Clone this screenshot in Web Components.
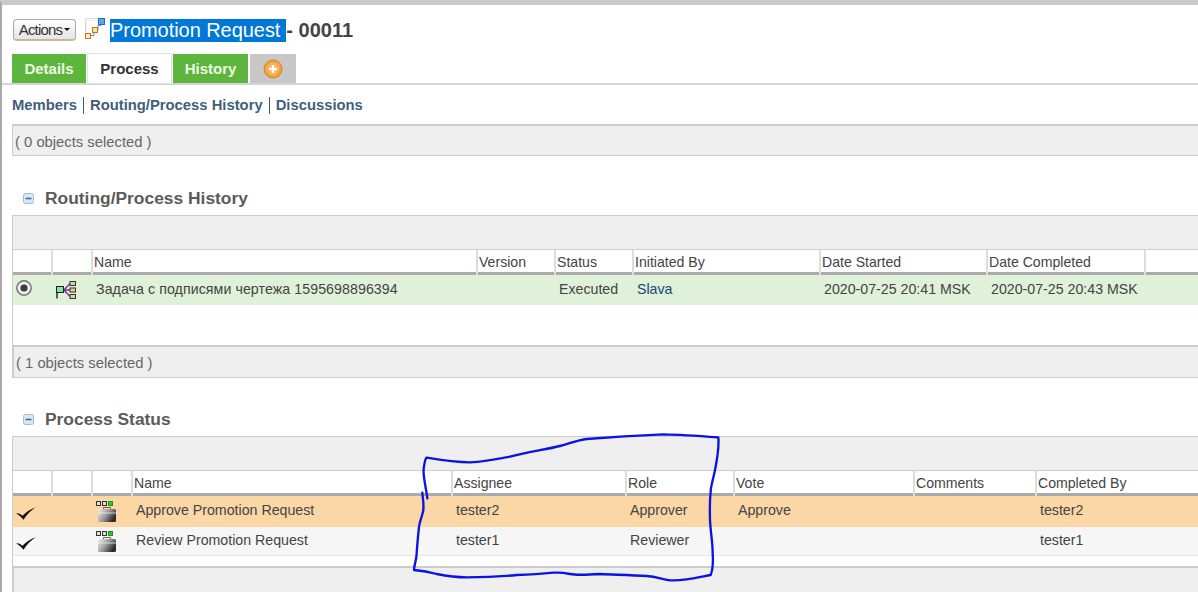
<!DOCTYPE html>
<html>
<head>
<meta charset="utf-8">
<title>Promotion Request</title>
<style>
  html, body { margin: 0; height: 100%; overflow: hidden; background: #fff; }
  body { font-family: "Liberation Sans", Arial, sans-serif; }
</style>
</head>
<body>
<app-page>
  <page-header></page-header>
  <tab-bar></tab-bar>
  <sub-nav></sub-nav>
  <status-bar>( 0 objects selected )</status-bar>

  <section-title style="margin-top:32px">Routing/Process History</section-title>
  <data-table cols="38px 40px 385px 78px 78px 187px 167px 158px 1fr">
    <grid-row type="head">
      <grid-cell></grid-cell><grid-cell></grid-cell>
      <grid-cell>Name</grid-cell><grid-cell>Version</grid-cell><grid-cell>Status</grid-cell>
      <grid-cell>Initiated By</grid-cell><grid-cell>Date Started</grid-cell><grid-cell>Date Completed</grid-cell><grid-cell></grid-cell>
    </grid-row>
    <grid-row bg="#dff1d8" h="30">
      <grid-cell icon><radio-icon></radio-icon></grid-cell>
      <grid-cell icon><tree-icon></tree-icon></grid-cell>
      <grid-cell style="letter-spacing:0.07px">Задача с подписями чертежа 1595698896394</grid-cell>
      <grid-cell></grid-cell>
      <grid-cell>Executed</grid-cell>
      <grid-cell style="color:#17477a">Slava</grid-cell>
      <grid-cell>2020-07-25 20:41 MSK</grid-cell>
      <grid-cell>2020-07-25 20:43 MSK</grid-cell>
      <grid-cell></grid-cell>
    </grid-row>
    <table-gap h="40"></table-gap>
    <status-bar style="height:33px">( 1 objects selected )</status-bar>
  </data-table>

  <section-title style="margin-top:31px">Process Status</section-title>
  <data-table cols="38px 40px 40px 320px 174px 108px 180px 122px 1fr">
    <grid-row type="head">
      <grid-cell></grid-cell><grid-cell></grid-cell><grid-cell></grid-cell>
      <grid-cell>Name</grid-cell><grid-cell>Assignee</grid-cell><grid-cell>Role</grid-cell>
      <grid-cell>Vote</grid-cell><grid-cell>Comments</grid-cell><grid-cell>Completed By</grid-cell>
    </grid-row>
    <grid-row bg="#fad7a4" h="31" style="--cell-shift:4px">
      <grid-cell icon><check-icon></check-icon></grid-cell><grid-cell></grid-cell>
      <grid-cell icon><case-icon></case-icon></grid-cell>
      <grid-cell>Approve Promotion Request</grid-cell><grid-cell>tester2</grid-cell><grid-cell>Approver</grid-cell>
      <grid-cell>Approve</grid-cell><grid-cell></grid-cell><grid-cell>tester2</grid-cell>
    </grid-row>
    <grid-row bg="#f6f6f6" h="28" line style="--cell-shift:3px">
      <grid-cell icon><check-icon></check-icon></grid-cell><grid-cell></grid-cell>
      <grid-cell icon><case-icon></case-icon></grid-cell>
      <grid-cell>Review Promotion Request</grid-cell><grid-cell>tester1</grid-cell><grid-cell>Reviewer</grid-cell>
      <grid-cell></grid-cell><grid-cell></grid-cell><grid-cell>tester1</grid-cell>
    </grid-row>
    <table-gap h="10"></table-gap>
    <status-bar></status-bar>
  </data-table>

  <ink-mark></ink-mark>
</app-page>

<script>
  // small helper, every element here is only markup + styles
  function define(name, html, setup) {
    customElements.define(name, class extends HTMLElement {
      constructor() {
        super();
        this.attachShadow({ mode: "open" });
        this.shadowRoot.innerHTML = html;
      }
      connectedCallback() {
        if (setup) setup(this);
      }
    });
  }

  define("app-page", `
    <style>
      :host {
        display: block;
        position: relative;
        height: 592px;
        box-sizing: border-box;
        overflow: hidden;
        border-top: 5px solid #c9c9c9;
        border-left: 2px solid #a9a9a9;
        padding-left: 10px;
      }
    </style>
    <slot></slot>`);

  define("page-header", `
    <style>
      :host {
        display: flex;
        align-items: center;
        height: 23px;
        margin-top: 13px;
        font-size: 20px;
        color: #444;
      }
      button {
        width: 63px;
        height: 22px;
        margin: 0 0 0 1px;
        padding: 0;
        box-sizing: border-box;
        display: flex;
        align-items: center;
        justify-content: center;
        font: 15px "Liberation Sans", Arial, sans-serif;
        letter-spacing: -0.8px;
        color: #333;
        background: linear-gradient(#fff, #eee 60%, #e6e6e6);
        border: 1px solid #aaa;
        border-bottom: 2px solid #c7b89a;
        border-radius: 4px;
      }
      button i {
        border: 3px solid transparent;
        border-top: 3px solid #111;
        border-bottom: 0;
        margin-left: 2px;
      }
      svg { margin: -2px 5px 0 9px; }
      mark { background: #0078d7; color: #fff; padding-right: 6px; margin-top: 1px; letter-spacing: -0.05px; }
      b { margin-top: 1px; }
    </style>
    <button>Actions<i></i></button>
    <svg width="20" height="21" viewBox="0 0 20 21">
      <path d="M0.5 20V0.5H19.5" stroke="#d8d8d8" fill="none"/>
      <path d="M1.5 20V2.5H12" stroke="#eee" fill="none"/>
      <path d="M6 17.5h3v-5h4v-5h3" stroke="#8a8a8a" fill="none"/>
      <rect x="13.5" y="0.5" width="6" height="6" fill="#5aa7e6" stroke="#1d6fb8"/>
      <rect x="7.5" y="9.5" width="5" height="5" fill="#f7dfae" stroke="#b5792a"/>
      <rect x="0.5" y="15.5" width="5" height="5" fill="#fbe8c0" stroke="#c07a22"/>
    </svg>
    <mark>Promotion Request</mark><b>- 00011</b>`);

  define("tab-bar", `
    <style>
      :host {
        display: flex;
        gap: 2px;
        height: 29px;
        margin: 13px 0 0 -10px;
        padding-left: 10px;
        border-bottom: 2px solid #d4d4d4;
        font: bold 15px "Liberation Sans", Arial, sans-serif;
      }
      span {
        display: flex;
        align-items: center;
        justify-content: center;
        box-sizing: border-box;
        background: #5cb53c;
        color: #eef8e6;
      }
      .on { background: #fff; color: #333; outline: 1px solid #e2e2e2; }
      .add { background: #c8c8c6; }
    </style>
    <span style="width:74px">Details</span>
    <span class="on" style="width:83px">Process</span>
    <span style="width:75px">History</span>
    <span class="add" style="width:46px">
      <svg width="20" height="20" viewBox="0 0 20 20">
        <circle cx="10" cy="10" r="9" fill="#f0a040" stroke="#d9822b"/>
        <circle cx="10" cy="10" r="6.5" fill="#f7b35c"/>
        <path d="M10 6v8M6 10h8" stroke="#fff" stroke-width="2.4"/>
      </svg>
    </span>`);

  define("sub-nav", `
    <style>
      :host {
        display: flex;
        align-items: center;
        box-sizing: border-box;
        height: 39px;
        padding-top: 1px;
        font: bold 14.8px "Liberation Sans", Arial, sans-serif;
        color: #3f5e7a;
      }
      span + span { border-left: 1px solid #3f5e7a; margin-left: 6px; padding-left: 6px; line-height: 17px; }
    </style>
    <span>Members</span><span>Routing/Process History</span><span>Discussions</span>`);

  define("status-bar", `
    <style>
      :host {
        display: flex;
        align-items: center;
        box-sizing: border-box;
        height: 32px;
        padding: 2px 0 0 2px;
        background: #efefef;
        border: 1px solid #ccc;
        border-top-width: 2px;
        border-right: 0;
        font: 14.8px "Liberation Sans", Arial, sans-serif;
        color: #666;
      }
    </style>
    <slot></slot>`);

  define("section-title", `
    <style>
      :host {
        display: flex;
        align-items: center;
        height: 20px;
        margin-bottom: 7px;
        padding-left: 11px;
        font: bold 17.4px "Liberation Sans", Arial, sans-serif;
        color: #5b5b5b;
      }
      svg { margin-right: 11px; }
    </style>
    <svg width="11" height="11" viewBox="0 0 11 11">
      <rect x="0.5" y="0.5" width="10" height="10" rx="2" fill="#dbe8f2" stroke="#9dbdd6"/>
      <path d="M2.5 5.5h6" stroke="#3d6d96" stroke-width="1.6"/>
    </svg>
    <slot></slot>`);

  define("data-table", `
    <style>
      :host {
        display: block;
        border-left: 1px solid #ccc;
      }
      .tools {
        height: 33px;
        background: #efefef;
        border-top: 1px solid #ccc;
      }
    </style>
    <div class="tools"></div>
    <slot></slot>`, el => {
      el.style.setProperty("--cols", el.getAttribute("cols"));
    });

  define("grid-row", `
    <style>
      :host {
        display: grid;
        grid-template-columns: var(--cols);
        background: #fff;
        font: 14.2px "Liberation Sans", Arial, sans-serif;
        color: #444;
        --cell-pad: 3px;
        --cell-shift: 2px;
      }
      :host([type="head"]) {
        height: 26px;
        box-sizing: border-box;
        border-top: 1px solid #ccc;
        font-size: 14.1px;
        --cell-line: #ddd;
        --cell-pad: 1px;
        background: linear-gradient(#fff 22px, #aaa 22px);
      }
      :host([line]) { border-bottom: 1px solid #e8e8e8; }
    </style>
    <slot></slot>`, el => {
      if (el.getAttribute("bg")) el.style.background = el.getAttribute("bg");
      if (el.getAttribute("h")) el.style.height = el.getAttribute("h") + "px";
    });

  define("grid-cell", `
    <style>
      :host {
        display: flex;
        align-items: center;
        min-width: 0;
        box-sizing: border-box;
        padding: 0 0 var(--cell-shift, 0) var(--cell-pad, 3px);
        white-space: nowrap;
        border-left: 2px solid var(--cell-line, transparent);
      }
      :host(:first-child) { border-left: 0; }
      :host([icon]) { padding: 0; }
    </style>
    <slot></slot>`);

  define("table-gap", `<style>:host { display: block; background: #fff; }</style>`, el => {
    el.style.height = el.getAttribute("h") + "px";
  });

  define("radio-icon", `
    <style>:host { display: block; margin: -4px 0 0 3px; line-height: 0; }</style>
    <svg width="16" height="16" viewBox="0 0 16 16">
      <circle cx="8" cy="8" r="7.2" fill="#eee" stroke="#6f6f6f" stroke-width="1.4"/>
      <circle cx="8" cy="8" r="3.6" fill="#3c3c3c"/>
    </svg>`);

  define("tree-icon", `
    <style>:host { display: block; margin-left: 3px; line-height: 0; }</style>
    <svg width="20" height="20" viewBox="0 0 20 20">
      <path d="M8 10L14 3.5M8 10h6M8 10l6 6.5" stroke="#8a2a9c" stroke-width="1.3" fill="none"/>
      <rect x="0.5" y="6.5" width="7" height="6" fill="#7fe6a0" stroke="#222"/>
      <path d="M1 12.5v6" stroke="#222" stroke-width="1.4"/>
      <rect x="14" y="1.5" width="5.5" height="4" fill="#d8d2a8" stroke="#333"/>
      <rect x="14" y="8" width="5.5" height="4" fill="#d8d2a8" stroke="#333"/>
      <rect x="14" y="14.5" width="5.5" height="4" fill="#d8d2a8" stroke="#333"/>
    </svg>`);

  define("check-icon", `
    <style>:host { display: block; margin: 4px 0 0 3px; line-height: 0; }</style>
    <svg width="20" height="13" viewBox="0 0 20 13">
      <path d="M0.3 6.5C2.5 6 4.5 7 6.5 8.8C10 5 14.5 2.2 19.7 0.3C14.5 3.8 11 7.6 7.5 12.8C5.5 10.4 3 8 0.3 6.5Z" fill="#111"/>
    </svg>`);

  define("case-icon", `
    <style>:host { display: block; margin-left: 2px; line-height: 0; }</style>
    <svg width="22" height="21" viewBox="0 0 22 21">
      <defs>
        <linearGradient id="g" x1="0" y1="0" x2="1" y2="0.5">
          <stop offset="0" stop-color="#f2f2f2"/><stop offset="0.55" stop-color="#9a9a9a"/><stop offset="1" stop-color="#2c2c2c"/>
        </linearGradient>
      </defs>
      <rect x="1.5" y="0.5" width="4" height="4" fill="#ddd" stroke="#333"/>
      <rect x="7.5" y="0.5" width="4" height="4" fill="#ddd" stroke="#333"/>
      <rect x="13.5" y="0.5" width="4" height="4" fill="#35c42a" stroke="#1c9a14"/>
      <path d="M8.5 8.5V6.5h7v2" stroke="#666" fill="none"/>
      <rect x="3" y="8" width="18" height="13" rx="1.5" fill="url(#g)"/>
      <path d="M3 12h18" stroke="#eee" stroke-width="0.8"/>
    </svg>`);

  // the hand drawn blue circle lies over the second table
  define("ink-mark", `
    <style>
      :host { position: absolute; left: -2px; top: -5px; pointer-events: none; }
      svg { position: absolute; left: 400px; top: 420px; }
    </style>
    <svg width="400" height="172" viewBox="0 0 1200 516">
      <path fill="none" stroke="#0a14e0" stroke-width="7" stroke-linejoin="round" stroke-linecap="round"
        d="M82 235C78 200 66 160 72 140C74 125 76 115 80 113C110 118 170 127 210 127C250 126 290 118 330 110C380 97 440 88 480 78C510 70 535 60 560 57C620 52 690 47 790 43C840 44 900 48 955 52C958 85 952 115 945 150C938 185 932 200 932 215C928 250 930 280 930 300C932 340 938 365 938 400C940 430 938 450 932 465C905 470 880 475 860 478C840 481 825 482 810 481C780 476 770 470 740 468C690 465 640 464 600 462C570 464 530 466 510 462C490 458 475 457 460 458C420 462 380 464 350 465C300 470 250 472 200 472C165 472 130 466 110 462C85 455 65 452 42 450C42 435 50 420 50 400C52 370 55 340 57 320C60 300 68 285 70 270C72 250 68 235 67 218"/>
    </svg>`);
</script>
</body>
</html>
